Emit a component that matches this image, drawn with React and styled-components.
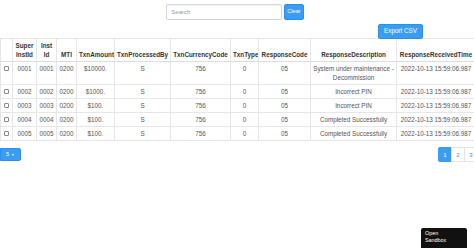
import React from "react";
import styled, { createGlobalStyle } from "styled-components";

const Global = createGlobalStyle`
  html, body { margin: 0; padding: 0; background: #fff; }
  body {
    font-family: "Liberation Sans", Arial, sans-serif;
    font-size: 6.3px;
    color: #333;
    overflow: hidden;
  }
`;

const Page = styled.div`
  width: 480px;
  padding-top: 4px;
`;

const SearchRow = styled.div`
  width: 470px;
  display: flex;
  justify-content: center;
  gap: 2px;
`;

const SearchInput = styled.input`
  box-sizing: border-box;
  width: 116px;
  height: 16px;
  border: 1px solid #d6d6d6;
  border-radius: 2px;
  padding: 0 4px;
  font-family: inherit;
  font-size: 6px;
  color: #555;
  outline: none;
  box-shadow: inset 0 1px 1px rgba(0,0,0,0.05);
  &::placeholder { color: #999; }
`;

const Btn = styled.button`
  box-sizing: border-box;
  height: ${p => p.$h || 16}px;
  padding: 0 ${p => p.$px || 3}px;
  border: 1px solid #2b8fe6;
  border-radius: 2px;
  background: #3b9cf3;
  color: #fff;
  font-family: inherit;
  font-size: ${p => p.$fs || 5.6}px;
  line-height: 1;
  cursor: pointer;
`;

const ExportRow = styled.div`
  display: flex;
  justify-content: flex-end;
  padding-right: 57px;
  margin-top: 4px;
`;

const Table = styled.table`
  width: 475px;
  table-layout: fixed;
  border-collapse: collapse;
  margin-top: -1px;
`;

const Th = styled.th`
  border: 1px solid #e6e6e6;
  border-bottom: 1px solid #dcdcdc;
  padding: 2px 2px;
  line-height: 9px;
  font-weight: bold;
  color: #333;
  vertical-align: bottom;
  text-align: center;
  white-space: normal;
  overflow: hidden;
`;

const Td = styled.td`
  border: 1px solid #e6e6e6;
  padding: 2px 2px;
  line-height: 9px;
  color: #555;
  vertical-align: top;
  text-align: center;
  overflow: hidden;
  white-space: ${p => (p.$wrap ? "normal" : "nowrap")};
`;

const Check = styled.input`
  appearance: none;
  box-sizing: border-box;
  display: block;
  width: 5px;
  height: 5px;
  margin: 2px 0 0 1px;
  border: 1px solid #888;
  border-radius: 1px;
  background: #fff;
`;

const Footer = styled.div`
  display: flex;
  justify-content: space-between;
  align-items: center;
  margin-top: 6px;
`;

const SizeBtn = styled(Btn)`
  display: flex;
  align-items: center;
  gap: 3px;
  width: 21px;
  padding: 0 0 0 5px;
  border-radius: 0 2px 2px 0;
`;

const Caret = styled.span`
  width: 0;
  height: 0;
  border-left: 1.6px solid transparent;
  border-right: 1.6px solid transparent;
  border-top: 2px solid #fff;
`;

const Pages = styled.div`
  display: flex;
  margin-right: 2px;
`;

const PageItem = styled.span`
  box-sizing: border-box;
  width: 14px;
  height: 15px;
  display: flex;
  align-items: center;
  justify-content: center;
  font-size: 6px;
  border: 1px solid ${p => (p.$active ? "#3b9cf3" : "#e3e3e3")};
  margin-left: -1px;
  background: ${p => (p.$active ? "#3b9cf3" : "#fff")};
  color: ${p => (p.$active ? "#fff" : "#3b8de0")};
  &:first-child { border-radius: 2px 0 0 2px; margin-left: 0; }
`;

const Sandbox = styled.div`
  position: fixed;
  right: 7px;
  bottom: 0;
  width: 46px;
  height: 20px;
  box-sizing: border-box;
  padding: 2px 4px;
  background: #111;
  color: #fff;
  font-size: 5.4px;
  line-height: 6.6px;
  border-radius: 2px 2px 0 0;
`;

const cols = [12, 24, 20, 20, 38, 56, 60, 28, 52, 86, 79];
const headers = [
  "",
  "Super InstId",
  "Inst Id",
  "MTI",
  "TxnAmount",
  "TxnProcessedBy",
  "TxnCurrencyCode",
  "TxnType",
  "ResponseCode",
  "ResponseDescription",
  "ResponseReceivedTime",
];

const rows = [
  ["0001", "0001", "0200", "$10000.", "S", "756", "0", "05", "System under maintenance - Decommission"],
  ["0002", "0002", "0200", "$1000.", "S", "756", "0", "05", "Incorrect PIN"],
  ["0003", "0003", "0200", "$100.", "S", "756", "0", "05", "Incorrect PIN"],
  ["0004", "0004", "0200", "$100.", "S", "756", "0", "05", "Completed Successfully"],
  ["0005", "0005", "0200", "$100.", "S", "756", "0", "05", "Completed Successfully"],
];

export default function App() {
  return (
    <Page>
      <Global />
      <SearchRow>
        <SearchInput placeholder="Search" />
        <Btn $px={2}>Clear</Btn>
      </SearchRow>
      <ExportRow>
        <Btn $h={15} $px={5} $fs={6.3}>Export CSV</Btn>
      </ExportRow>
      <Table>
        <colgroup>
          {cols.map((w, i) => (
            <col key={i} style={{ width: w }} />
          ))}
        </colgroup>
        <thead>
          <tr>
            {headers.map((h, i) => (
              <Th key={i}>{h}</Th>
            ))}
          </tr>
        </thead>
        <tbody>
          {rows.map((r, i) => (
            <tr key={i}>
              <Td>
                <Check type="checkbox" />
              </Td>
              {r.map((c, j) => (
                <Td key={j} $wrap={j === 8}>
                  {c}
                </Td>
              ))}
              <Td>2022-10-13 15:59:06.987</Td>
            </tr>
          ))}
        </tbody>
      </Table>
      <Footer>
        <SizeBtn $h={13}>
          5 <Caret />
        </SizeBtn>
        <Pages>
          <PageItem $active>1</PageItem>
          <PageItem>2</PageItem>
          <PageItem>3</PageItem>
        </Pages>
      </Footer>
      <Sandbox>
        Open
        <br />
        Sandbox
      </Sandbox>
    </Page>
  );
}
